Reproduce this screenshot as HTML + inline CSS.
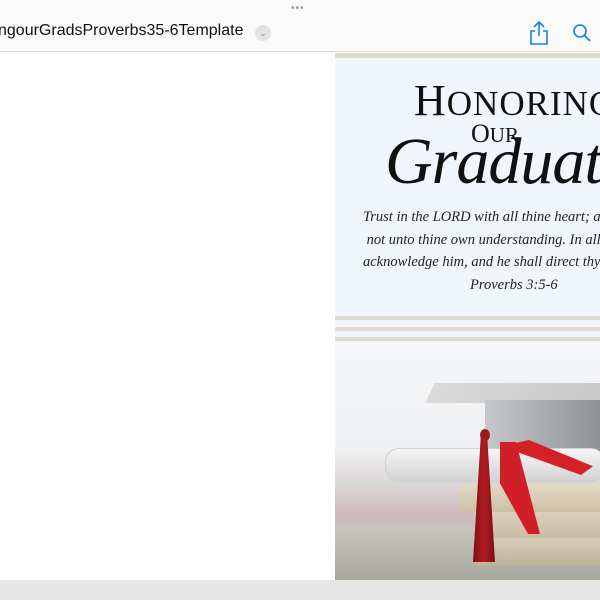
<!DOCTYPE html>
<html><head><style>
*{margin:0;padding:0;box-sizing:border-box}
body{width:600px;height:600px;overflow:hidden;background:#fff;font-family:"Liberation Sans",sans-serif;position:relative}
.abs{position:absolute}
</style></head><body>
<div class="abs" style="left:0;top:0;width:600px;height:52px;background:#fafafa;border-bottom:1px solid #dcdcdc"></div>
<div class="abs" style="left:291px;top:3px;font-size:10px;color:#999;letter-spacing:1px">•••</div>
<div class="abs" style="left:-2px;top:22px;font-size:16px;color:#111">ngourGradsProverbs35-6Template</div>
<div class="abs" style="left:255px;top:25px;width:16px;height:16px;border-radius:50%;background:#e2e2e2;color:#888;font-size:9px;text-align:center;line-height:16px">⌄</div>
<svg class="abs" style="left:528px;top:20px" width="22" height="26" viewBox="0 0 22 26"><path d="M11 2V16M6 7L11 2L16 7M7 11H3V24H19V11H15" fill="none" stroke="#1a7cf0" stroke-width="1.6"/></svg>
<svg class="abs" style="left:572px;top:23px" width="20" height="20" viewBox="0 0 20 20"><circle cx="8" cy="8" r="6" fill="none" stroke="#1a7cf0" stroke-width="1.6"/><path d="M12.5 12.5L18 18" stroke="#1a7cf0" stroke-width="1.8"/></svg>
<div class="abs" style="left:335px;top:53px;width:265px;height:527px;background:#f1f6fc;overflow:hidden">
<div class="abs" style="left:0;top:0;width:265px;height:5px;background:#dcdbcc"></div>
<div class="abs" style="left:0;top:263px;width:265px;height:4px;background:#dcdbcc"></div>
<div class="abs" style="left:0;top:274px;width:265px;height:4px;background:#dcdbcc"></div>
<div class="abs" style="left:0;top:284px;width:265px;height:4px;background:#dcdbcc"></div>
<div class="abs" style="left:79px;top:22px;font-family:'Liberation Serif',serif;font-size:44px;color:#111;white-space:nowrap;letter-spacing:1px">H<span style="font-size:35px">ONORING</span></div>
<div class="abs" style="left:136px;top:66px;font-family:'Liberation Serif',serif;font-size:26px;color:#111">O<span style="font-size:21px">UR</span></div>
<div class="abs" style="left:50px;top:71px;font-family:'Liberation Serif',serif;font-style:italic;font-size:66px;color:#111;white-space:nowrap;letter-spacing:-1px">Graduates</div>
<div class="abs" style="left:28px;top:153px;font-family:'Liberation Serif',serif;font-style:italic;font-size:14.5px;line-height:22.5px;color:#222;white-space:nowrap">Trust in the LORD with all thine heart; and lean<br>&nbsp;not unto thine own understanding. In all thy<br>acknowledge him, and he shall direct thy paths.<br><span style="padding-left:107px">Proverbs 3:5-6</span></div>
<div class="abs" style="left:0;top:289px;width:265px;height:238px;overflow:hidden;background:linear-gradient(180deg,#f5f7f9 0%,#eef0f1 45%,#dcd6d6 60%,#cfb9bd 72%,#c9c3bf 80%,#b5b2ab 92%,#9e9c96 100%)">
<div class="abs" style="left:0;top:185px;width:265px;height:53px;background:linear-gradient(180deg,#c8c5bf,#a9a69e)"></div>
<div class="abs" style="left:95px;top:41px;width:175px;height:20px;background:linear-gradient(90deg,#dadada,#c8c8c8);transform:skewX(-25deg)"></div>
<div class="abs" style="left:150px;top:58px;width:120px;height:52px;background:linear-gradient(90deg,#c7c8ca,#8d8f93)"></div>
<div class="abs" style="left:50px;top:106px;width:220px;height:34px;border-radius:14px;background:linear-gradient(180deg,#f6f6f6,#d2d2d4);border:1px solid #cfcfd2"></div>
<div class="abs" style="left:125px;top:142px;width:140px;height:28px;background:linear-gradient(180deg,#e4d9c5,#cdbfa5)"></div>
<div class="abs" style="left:140px;top:170px;width:125px;height:26px;background:linear-gradient(180deg,#dcd0bb,#c9bca4)"></div>
<div class="abs" style="left:140px;top:196px;width:125px;height:28px;background:linear-gradient(180deg,#d7ccb8,#bfb29b)"></div>
<div class="abs" style="left:145px;top:87px;width:10px;height:12px;border-radius:50%;background:#9c1a1e"></div>
<div class="abs" style="left:138px;top:96px;width:22px;height:124px;background:linear-gradient(90deg,#7a0f14,#b01c22,#7a0f14);clip-path:polygon(35% 0,65% 0,100% 100%,0 100%)"></div>
<div class="abs" style="left:165px;top:100px;width:40px;height:92px;background:#d11f27;clip-path:polygon(0 0,40% 0,100% 100%,70% 100%,0 45%)"></div>
<div class="abs" style="left:178px;top:98px;width:80px;height:35px;background:#d42128;clip-path:polygon(0 10%,20% 0,100% 75%,85% 100%,0 30%)"></div>
</div>
</div>
<div class="abs" style="left:0;top:580px;width:600px;height:20px;background:#e6e6e6"></div>
</body></html>
